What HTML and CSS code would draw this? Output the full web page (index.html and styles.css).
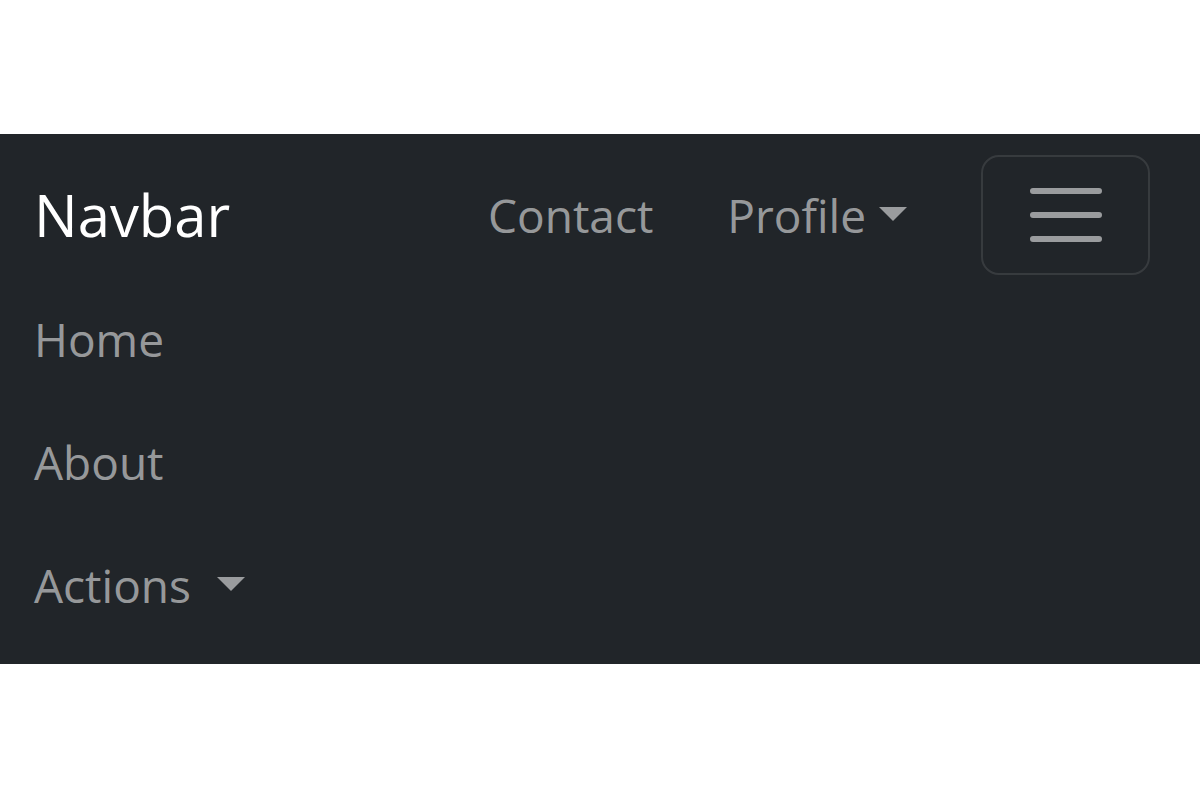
FILE: index.html
```html
<!DOCTYPE html>
<html lang="en">
<head>
<meta charset="UTF-8" />
<title>Navbar</title>
<link rel="stylesheet" href="styles.css">
</head>
<body>
  <nav class="navbar" aria-label="Main navigation">
    <div class="navbar-top">
      <a class="navbar-brand" href="#">Navbar</a>
      <ul class="nav-right">
        <li><a class="nav-link" href="#">Contact</a></li>
        <li><a class="nav-link dropdown-toggle" href="#">Profile</a></li>
      </ul>
      <button class="navbar-toggler" type="button" aria-label="Toggle navigation">
        <svg viewBox="0 0 30 30" width="90" height="90" aria-hidden="true">
          <path d="M4 7h22M4 15h22M4 23h22" stroke="rgba(255,255,255,0.55)" stroke-width="2" stroke-linecap="round" fill="none"/>
        </svg>
      </button>
    </div>
    <ul class="nav-collapse">
      <li><a class="nav-link" href="#">Home</a></li>
      <li><a class="nav-link" href="#">About</a></li>
      <li><a class="nav-link dropdown-toggle wide-caret" href="#">Actions</a></li>
    </ul>
  </nav>
</body>
</html>
```
FILE: styles.css
```css
* {
  box-sizing: border-box;
  margin: 0;
  padding: 0;
}
body {
  background: #fff;
  font-family: 'Open Sans', 'Noto Sans', sans-serif;
  padding-top: 134px;
}
ul {
  list-style: none;
}
a {
  text-decoration: none;
}
.navbar {
  background: #212529;
  height: 530px;
  padding-top: 21px;
}
.navbar-top {
  display: flex;
  align-items: center;
  height: 120px;
  padding: 0 50px 0 34px;
}
.navbar-brand {
  flex: 1;
  color: #fff;
  font-size: 58px;
  line-height: 84px;
}
.nav-right {
  display: flex;
  gap: 26px;
  margin-right: 50px;
}
.nav-link {
  display: inline-block;
  color: rgba(255, 255, 255, 0.55);
  font-size: 46px;
  line-height: 72px;
  padding: 0 24px;
}
.dropdown-toggle::after {
  content: "";
  display: inline-block;
  margin-left: 13px;
  vertical-align: 12px;
  border-top: 14px solid;
  border-left: 14px solid transparent;
  border-right: 14px solid transparent;
}
.navbar-toggler {
  width: 169px;
  height: 120px;
  display: flex;
  align-items: center;
  justify-content: center;
  background: transparent;
  border: 2px solid rgba(255, 255, 255, 0.1);
  border-radius: 18px;
}
.nav-collapse {
  padding: 2px 0 0 34px;
}
.nav-collapse li {
  height: 123px;
  display: flex;
  align-items: center;
}
.nav-collapse .nav-link {
  padding: 0;
}
.nav-collapse .wide-caret::after {
  margin-left: 26px;
}
```
